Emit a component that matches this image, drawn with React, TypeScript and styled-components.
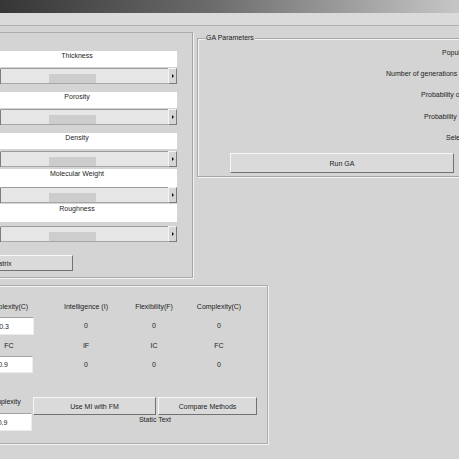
import React from "react"
import styled, {createGlobalStyle} from "styled-components";

const GlobalStyle = createGlobalStyle`
    html, body {
        margin: 0;
        padding: 0;
        background-color: #d4d4d4;
        overflow: hidden;
    }
`

const WindowWrapper = styled.div`
    width: 459px;
    height: 459px;
    overflow: hidden;
    background-color: #d4d4d4;
    font-family: "Liberation Sans", Arial, sans-serif;
    font-size: 7px;
    color: #1c1c1c;
`
const TitleBar = styled.div`
    height: 13px;
    background: linear-gradient(to right, #363636 0%, #6a6a6a 45%, #c6c6c6 100%);
`
const MenuStrip = styled.div`
    height: 12px;
    background-color: #dadada;
    border-bottom: 1px solid #b2b2b2;
`
const Stage = styled.div`
    margin-left: -80px;
    padding-top: 6px;
`
const TopRow = styled.div`
    display: flex;
    align-items: flex-start;
`
const SliderPanel = styled.div`
    box-sizing: border-box;
    flex: 0 0 273px;
    height: 246px;
    display: flex;
    flex-direction: column;
    border-top: 1px solid #adadad;
    border-right: 1px solid #a4a4a4;
    border-bottom: 1px solid #adadad;
    box-shadow: 1px 1px 0 #f2f2f2;
`
const CaptionBox = styled.div<{ $top: number, $h: number }>`
    margin-top: ${p => p.$top}px;
    margin-left: 57px;
    width: 200px;
    height: ${p => p.$h}px;
    background-color: #ffffff;
    line-height: 9px;
    text-align: center;
    white-space: nowrap;
`
const SliderFrame = styled.div<{ $top: number }>`
    box-sizing: border-box;
    display: flex;
    margin-top: ${p => p.$top}px;
    margin-left: 72px;
    width: 185px;
    height: 16px;
`
const ArrowButton = styled.div`
    box-sizing: border-box;
    flex: 0 0 9px;
    display: flex;
    align-items: center;
    justify-content: center;
    background-color: #d6d6d6;
    border-top: 1px solid #f4f4f4;
    border-left: 1px solid #f4f4f4;
    border-right: 1px solid #7c7c7c;
    border-bottom: 1px solid #7c7c7c;
`
const ArrowGlyph = styled.div`
    width: 0;
    height: 0;
    border-top: 2px solid transparent;
    border-bottom: 2px solid transparent;
    border-left: 2px solid #111;
`
const Track = styled.div<{ $offset: number }>`
    box-sizing: border-box;
    flex: 1;
    display: flex;
    align-items: flex-end;
    padding-left: ${p => p.$offset}px;
    background-color: #e6e6e6;
    border-top: 1px solid #9c9c9c;
    border-bottom: 1px solid #a6a6a6;
`
const Thumb = styled.div`
    width: 47px;
    height: 9px;
    background-color: #cdcdcd;
`
const PushButton = styled.div<{ $w: number, $h: number, $left?: number, $top?: number }>`
    box-sizing: border-box;
    flex: 0 0 auto;
    width: ${p => p.$w}px;
    height: ${p => p.$h}px;
    margin-left: ${p => p.$left || 0}px;
    margin-top: ${p => p.$top || 0}px;
    display: flex;
    align-items: center;
    justify-content: center;
    white-space: nowrap;
    background-color: #dadada;
    border-top: 1px solid #f6f6f6;
    border-left: 1px solid #f6f6f6;
    border-right: 1px solid #727272;
    border-bottom: 1px solid #727272;
`
const GroupBox = styled.div`
    position: relative;
    box-sizing: border-box;
    flex: 0 0 330px;
    margin-left: 4px;
    margin-top: 6px;
    padding: 9px 0 3px 0;
    display: flex;
    flex-direction: column;
    border: 1px solid #a6a6a6;
    box-shadow: inset 1px 1px 0 #f4f4f4, 1px 1px 0 #f4f4f4;
`
const GroupTitle = styled.span`
    position: absolute;
    top: -6px;
    left: 7px;
    padding: 0 1px;
    line-height: 9px;
    background-color: #d4d4d4;
    white-space: nowrap;
`
const ParamLabel = styled.div<{ $x: number, $top: number }>`
    margin-left: ${p => p.$x}px;
    margin-top: ${p => p.$top}px;
    line-height: 10px;
    height: 10px;
    white-space: nowrap;
`
const BottomPanel = styled.div`
    box-sizing: border-box;
    width: 348px;
    height: 159px;
    margin-top: 7px;
    padding-top: 11px;
    border: 1px solid #adadad;
    box-shadow: inset 1px 1px 0 #f2f2f2, 1px 1px 0 #f2f2f2;
`
const ResultGrid = styled.div`
    display: grid;
    grid-template-columns: 131px 68px 68px 62px;
    grid-template-rows: 20px 18px 21px 17px;
    align-items: center;
    text-align: center;
    white-space: nowrap;
`
const GridCell = styled.div`
    line-height: 10px;
`
const EditCell = styled.div<{ $w: number, $right: number }>`
    justify-self: end;
    width: ${p => p.$w}px;
    margin-right: ${p => p.$right}px;
    line-height: 10px;
    text-align: center;
    white-space: nowrap;
`
const EditBox = styled.div<{ $w: number, $right: number, $h: number }>`
    box-sizing: border-box;
    justify-self: end;
    width: ${p => p.$w}px;
    height: ${p => p.$h}px;
    margin-right: ${p => p.$right}px;
    display: flex;
    align-items: center;
    justify-content: center;
    background-color: #ffffff;
    border-top: 1px solid #a2a2a2;
    border-left: 1px solid #a2a2a2;
    border-right: 1px solid #ececec;
    border-bottom: 1px solid #ececec;
`
const ActionRow = styled.div`
    display: flex;
    margin-top: 24px;
`
const LeftCell = styled.div`
    flex: 0 0 112px;
    display: flex;
    flex-direction: column;
    align-items: flex-end;
`
const LeftCaption = styled.div`
    width: 59px;
    margin-right: 0;
    line-height: 10px;
    text-align: center;
    white-space: nowrap;
    margin-bottom: 6px;
`
const ButtonsArea = styled.div`
    display: flex;
    flex-direction: column;
`
const ButtonsRow = styled.div`
    display: flex;
    gap: 2px;
`
const StaticText = styled.div`
    width: 244px;
    line-height: 10px;
    text-align: center;
`

const sliders = [
    {name: 'Thickness', captionTop: 18, captionH: 16, sliderTop: 1},
    {name: 'Porosity', captionTop: 8, captionH: 16, sliderTop: 1},
    {name: 'Density', captionTop: 8, captionH: 16, sliderTop: 2},
    {name: 'Molecular Weight', captionTop: 2, captionH: 18, sliderTop: 0},
    {name: 'Roughness', captionTop: 1, captionH: 18, sliderTop: 4},
]

const params = [
    {label: 'Population size', x: 244, top: 0},
    {label: 'Number of generations', x: 188, top: 11},
    {label: 'Probability of mutation', x: 223, top: 11},
    {label: 'Probability of crossover', x: 226, top: 12},
    {label: 'Selection method', x: 248, top: 11},
]

const Slider: React.FC<{ top: number }> = ({top}) => (
    <SliderFrame $top={top}>
        <ArrowButton/>
        <Track $offset={48}><Thumb/></Track>
        <ArrowButton><ArrowGlyph/></ArrowButton>
    </SliderFrame>
)

const App: React.FC = () => {
    return (
        <WindowWrapper>
            <GlobalStyle/>
            <TitleBar/>
            <MenuStrip/>
            <Stage>
                <TopRow>
                    <SliderPanel>
                        {sliders.map(s => (
                            <React.Fragment key={s.name}>
                                <CaptionBox $top={s.captionTop} $h={s.captionH}>{s.name}</CaptionBox>
                                <Slider top={s.sliderTop}/>
                            </React.Fragment>
                        ))}
                        <PushButton $w={142} $h={16} $left={11} $top={13}>Matrix</PushButton>
                    </SliderPanel>
                    <GroupBox>
                        <GroupTitle>GA Parameters</GroupTitle>
                        {params.map(p => (
                            <ParamLabel key={p.label} $x={p.x} $top={p.top}>{p.label}</ParamLabel>
                        ))}
                        <PushButton $w={224} $h={20} $left={32} $top={10}>Run GA</PushButton>
                    </GroupBox>
                </TopRow>
                <BottomPanel>
                    <ResultGrid>
                        <EditCell $w={60} $right={16}>Complexity(C)</EditCell>
                        <GridCell>Intelligence (I)</GridCell>
                        <GridCell>Flexibility(F)</GridCell>
                        <GridCell>Complexity(C)</GridCell>

                        <EditBox $w={60} $right={18} $h={18}>0.3</EditBox>
                        <GridCell>0</GridCell>
                        <GridCell>0</GridCell>
                        <GridCell>0</GridCell>

                        <EditCell $w={60} $right={13}>FC</EditCell>
                        <GridCell>IF</GridCell>
                        <GridCell>IC</GridCell>
                        <GridCell>FC</GridCell>

                        <EditBox $w={60} $right={19} $h={17}>0.9</EditBox>
                        <GridCell>0</GridCell>
                        <GridCell>0</GridCell>
                        <GridCell>0</GridCell>
                    </ResultGrid>
                    <ActionRow>
                        <LeftCell>
                            <LeftCaption>Complexity</LeftCaption>
                            <EditBox $w={59} $right={1} $h={18}>0.9</EditBox>
                        </LeftCell>
                        <ButtonsArea>
                            <ButtonsRow>
                                <PushButton $w={123} $h={18}>Use MI with FM</PushButton>
                                <PushButton $w={99} $h={18}>Compare Methods</PushButton>
                            </ButtonsRow>
                            <StaticText>Static Text</StaticText>
                        </ButtonsArea>
                    </ActionRow>
                </BottomPanel>
            </Stage>
        </WindowWrapper>
    )
}

export default App
